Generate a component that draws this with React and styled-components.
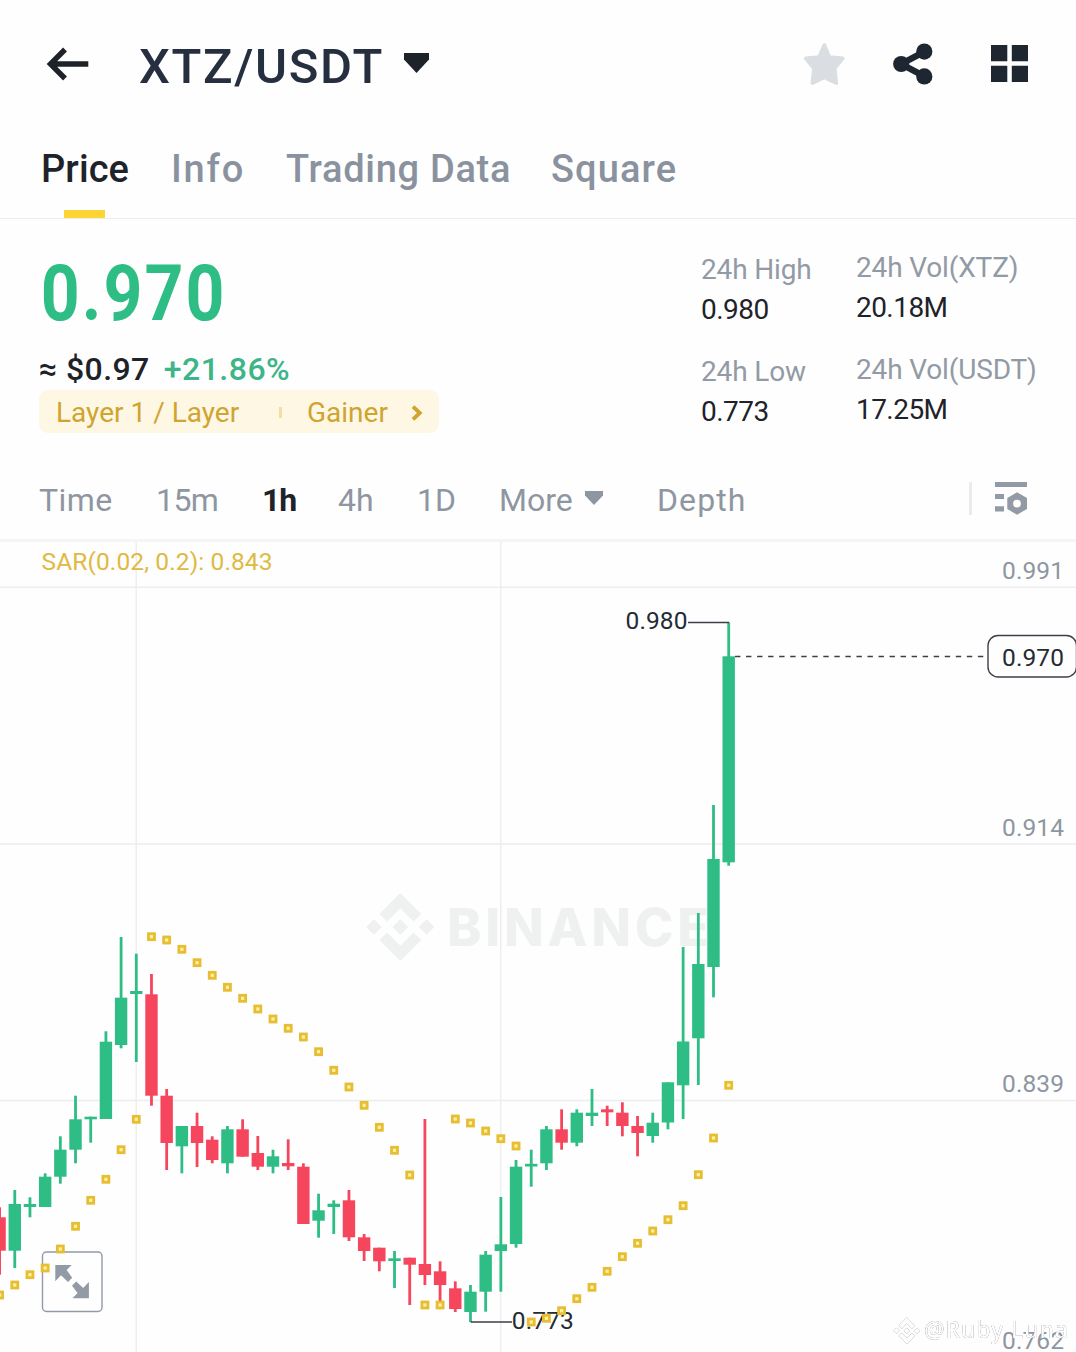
import React from "react";
import styled, { createGlobalStyle } from "styled-components";

const GlobalStyle = createGlobalStyle`
  * {
    box-sizing: border-box;
  }

  body {
    margin: 0;
    background: #fefefe;
    font-family: Roboto, "Liberation Sans", sans-serif;
    color: #1e2329;
  }
`;

// === STYLES ===
const Page = styled.div`
  width: 1076px;
  height: 1352px;
  overflow: hidden;
  display: flex;
  flex-direction: column;
  background: #fefefe;
`;

const Header = styled.header`
  height: 128px;
  padding: 0 47px 0 46px;
  display: flex;
  align-items: center;
  justify-content: space-between;

  svg {
    display: block;
  }
`;

const HeaderLeft = styled.div`
  display: flex;
  align-items: center;
  gap: 22px;
`;

const HeaderRight = styled.div`
  display: grid;
  grid-template-columns: 89px 98px 38px;
  align-items: center;
`;

const Pair = styled.h1`
  margin: 5px 0 0 28px;
  width: 243px;
  font-size: 49px;
  line-height: 58px;
  font-weight: 500;
  letter-spacing: 1.65px;
  white-space: nowrap;
  color: #262f3f;

  & + svg {
    margin-top: -2px;
  }
`;

const Tabs = styled.nav`
  height: 91px;
  padding-left: 41px;
  display: grid;
  grid-template-columns: 130px 115px 265px auto;
  border-bottom: 1px solid #ededee;
`;

const Tab = styled.div`
  display: flex;
  flex-direction: column;
  align-items: flex-start;
  justify-content: space-between;
  padding-top: 18px;
  font-size: 38px;
  line-height: 46px;
  font-weight: 500;
  letter-spacing: ${(p) => p.$spacing || 0}px;
  white-space: nowrap;
  color: ${(p) => (p.$active ? "#1e2329" : "#8a929f")};
`;

const TabMark = styled.span`
  width: 41px;
  height: 8px;
  margin-left: 23px;
  background: #fcd535;
`;

const Summary = styled.section`
  height: 241px;
  display: grid;
  grid-template-columns: 662px 155px auto;
  padding-left: 39px;
`;

const PriceBox = styled.div`
  padding-top: 30px;
`;

const LastPrice = styled.div`
  height: 90px;
  padding-left: 2px;
  font-size: 78px;
  line-height: 90px;
  font-weight: 700;
  letter-spacing: 2.4px;
  color: #2ebd85;
  transform: scaleX(0.87);
  transform-origin: 0 0;
`;

const Approx = styled.div`
  display: flex;
  gap: 14px;
  margin-top: 11px;
  height: 40px;
  font-size: 32px;
  line-height: 38px;
  font-weight: 500;
  letter-spacing: 0.4px;

  span:last-child {
    color: #3db588;
    letter-spacing: 0.5px;
  }
`;

const Tags = styled.div`
  display: grid;
  grid-template-columns: 223px 28px 104px auto;
  align-items: center;
  width: 400px;
  height: 43px;
  padding-left: 17px;
  border-radius: 9px;
  background: #fef7e4;
  color: #cfa42f;
  font-size: 28px;
  line-height: 45px;
  white-space: nowrap;
`;

const TagSplit = styled.span`
  width: 3px;
  height: 11px;
  background: #f3dda2;
`;

const StatCol = styled.div`
  padding-top: ${(p) => p.$top}px;
`;

const Stat = styled.div`
  height: 102px;
  font-size: 28px;
  line-height: 40px;
  letter-spacing: -0.55px;
  white-space: nowrap;

  span {
    display: block;
    color: #929aa5;
    letter-spacing: -0.15px;
  }
`;

const Intervals = styled.div`
  height: 82px;
  padding-left: 39px;
  display: grid;
  grid-template-columns: 117px 106px 76px 79px 82px 158px 312px 26px auto;
  align-items: center;
  border-bottom: 3px solid #f5f5f6;
  color: #8e96a2;
`;

const Interval = styled.div`
  display: flex;
  align-items: center;
  gap: 12px;
  font-size: 32px;
  line-height: 38px;
  letter-spacing: ${(p) => p.$spacing || 0}px;
  font-weight: ${(p) => (p.$active ? 700 : 400)};
  color: ${(p) => (p.$active ? "#1e2329" : "inherit")};

  svg {
    margin-top: -4px;
  }
`;

const Divider = styled.span`
  width: 3px;
  height: 33px;
  margin-top: -3px;
  background: #eaebee;
`;

const SettingsSvg = styled.svg`
  margin-top: -3px;
`;

const Chart = styled.svg`
  display: block;
  width: 1076px;
  height: 810px;
  font-family: Roboto, sans-serif;
  font-size: 24.5px;
`;

const AxisText = styled.text`
  fill: #8e96a2;
`;

const PriceText = styled.text`
  fill: #262b33;
`;

const SarText = styled.text`
  fill: #dfba42;
`;

const WatermarkText = styled.text`
  font-family: Inter, sans-serif;
  font-size: 52px;
  font-weight: 800;
  fill: #eff1f1;
`;

const UserText = styled.text`
  font-family: "Noto Sans", sans-serif;
  font-size: 23px;
  font-weight: 500;
  fill: #fefefe;
`;

const Signature = styled.g`
  filter: drop-shadow(0.9px 0.9px 0.4px rgba(60, 60, 60, 0.8));
`;

// === DATA ===
const GREEN = "#2ebd85";
const RED = "#f6465d";
const STEP = 15.19;
const LAST_X = 728.7;

// [up, high, body top, body bottom, low, sar]
const candles = [
  [0, 1207.3, 1217.3, 1250.7, 1274.7, 1295],
  [1, 1190, 1204, 1250.7, 1268, 1285],
  [1, 1197.3, 1204, 1207, 1217.3, 1274.7],
  [1, 1173.3, 1176.7, 1207, 1207, 1268],
  [1, 1136.3, 1149.7, 1176.7, 1183.7, 1249],
  [1, 1095.7, 1119.3, 1149.7, 1163.3, 1226.3],
  [1, 1116.7, 1116.7, 1119.3, 1142.7, 1200.3],
  [1, 1031.3, 1041.7, 1119, 1119, 1179.3],
  [1, 937, 997.7, 1045, 1048.3, 1149.7],
  [1, 953.7, 991, 994, 1062, 1119.3],
  [0, 974, 994.3, 1095.7, 1105.7, 936.7],
  [0, 1089, 1095.7, 1143, 1170, 940],
  [1, 1126, 1126, 1146.3, 1173.3, 949.3],
  [0, 1112.7, 1126, 1143, 1167, 962.7],
  [0, 1136.3, 1139.7, 1160, 1163.3, 975.3],
  [1, 1126, 1129.3, 1163.3, 1173.3, 987.3],
  [0, 1119.3, 1129.3, 1156.7, 1156.7, 998.3],
  [0, 1136, 1153, 1166.7, 1170, 1009],
  [1, 1149.7, 1156.3, 1166.7, 1173.3, 1019],
  [0, 1139.3, 1163, 1166.3, 1170, 1028.3],
  [0, 1163.3, 1166.7, 1224, 1224, 1037],
  [1, 1193.7, 1210.3, 1220.7, 1237.7, 1051.7],
  [1, 1200.3, 1203.7, 1207, 1234, 1070.3],
  [0, 1190, 1200.3, 1237.3, 1241, 1087],
  [0, 1234, 1237.3, 1251, 1261, 1105.3],
  [0, 1247.7, 1247.7, 1261.3, 1271.3, 1127.3],
  [1, 1251, 1258.3, 1261, 1288, 1150.3],
  [0, 1257.7, 1257.7, 1264.7, 1305, 1175],
  [0, 1119, 1264, 1275, 1285, 1305],
  [0, 1261.3, 1271.3, 1285, 1305, 1305],
  [0, 1281.3, 1288.3, 1309, 1312, 1119],
  [1, 1285, 1291.7, 1312, 1322, 1123],
  [1, 1251, 1254.7, 1291.7, 1311.7, 1131],
  [1, 1197, 1244.3, 1251, 1291.7, 1138.7],
  [1, 1160, 1166.7, 1244, 1247.7, 1146],
  [1, 1149.7, 1163.8, 1166.5, 1186.7, 1322],
  [1, 1126, 1129.3, 1163.3, 1170, 1318.3],
  [0, 1109.3, 1129.3, 1142.7, 1149.7, 1310.7],
  [1, 1109.3, 1112.7, 1142.7, 1146.3, 1298.7],
  [1, 1089, 1112.7, 1116, 1126, 1287.3],
  [0, 1105.7, 1109.3, 1112.3, 1126, 1271.3],
  [0, 1102.3, 1112.7, 1126, 1136.3, 1256.7],
  [0, 1116, 1126, 1133, 1156.3, 1243.3],
  [1, 1112.7, 1122.7, 1136, 1142.7, 1231],
  [1, 1082.3, 1082.3, 1122.5, 1129.3, 1219.7],
  [1, 947, 1041.5, 1085.3, 1119, 1205.7],
  [1, 913, 964, 1038.3, 1085, 1174.7],
  [1, 805, 859, 967, 997.3, 1138],
  [1, 622.3, 656.3, 862.3, 865.7, 1085.3],
];

const candleX = (i) => LAST_X - STEP * (candles.length - 1 - i);

const axis = [
  ["0.991", 579],
  ["0.914", 836],
  ["0.839", 1092],
  ["0.762", 1349],
];

// === ICONS ===
const BackIcon = () => (
  <svg width="43" height="34" viewBox="0 0 43 34" fill="none" stroke="#1e2329">
    <path d="M42.3 17H4.5M19 2.5 4.5 17 19 31.5" strokeWidth="5.4" />
  </svg>
);

const Caret = ({ width, height, color }) => (
  <svg width={width} height={height} viewBox="0 0 25 20" preserveAspectRatio="none">
    <path d="M0 0H25V6.5L12.5 20 0 6.5Z" fill={color} />
  </svg>
);

const StarIcon = () => (
  <svg width="42" height="42" viewBox="0 0 42 42">
    <path
      d="M20.3 2 25.5 14 38.8 15.3 30.7 25.5 32.3 40 20.3 34.3 8.3 40 9.9 25.5 1.8 15.3 15.1 14Z"
      fill="#dadde2"
      stroke="#dadde2"
      strokeWidth="3.6"
      strokeLinejoin="round"
    />
  </svg>
);

const ShareIcon = () => (
  <svg width="40" height="42" viewBox="0 0 40 42" fill="#1e2631">
    <path d="M31.5 8.7 8.2 21 31.5 33.3" fill="none" stroke="#1e2631" strokeWidth="6.4" />
    <circle cx="31.3" cy="8.6" r="8.1" />
    <circle cx="8.2" cy="21" r="8.1" />
    <circle cx="31.3" cy="33.4" r="8.1" />
  </svg>
);

const GridIcon = () => (
  <svg width="38" height="38" viewBox="0 0 38 38" fill="#1e2631">
    <path d="M0 0H16.3V16.3H0ZM20.8 0H37V16.3H20.8ZM0 20.8H16.3V37H0ZM20.8 20.8H37V37H20.8Z" />
  </svg>
);

const ChevronIcon = () => (
  <svg width="13" height="16" viewBox="0 0 13 16" fill="none" stroke="#cfa42f">
    <path d="M2 1.6 8.8 8 2 14.4" strokeWidth="3.8" />
  </svg>
);

const SettingsIcon = () => (
  <SettingsSvg width="33" height="34" viewBox="0 0 33 34" fill="#929aa5">
    <path d="M0 1H32V6H0ZM0 13H9V18H0ZM0 25.3H9V30.6H0Z" />
    <path
      fillRule="evenodd"
      d="M22 11.3 32 17V28L22 33.7 12.3 28V17ZM22 18.7A3.9 3.9 0 1 0 22 26.5 3.9 3.9 0 1 0 22 18.7Z"
    />
  </SettingsSvg>
);

const LogoPath = () => (
  <path d="M38.73 53.2l24.59-24.58 24.6 24.6 14.3-14.31L63.32 0 24.43 38.9l14.3 14.3zM0 63.31l14.3-14.31 14.31 14.31-14.31 14.3zM38.73 73.41l24.59 24.59 24.6-24.6 14.31 14.29-38.9 38.91-38.91-38.88v-.02zM98 63.31l14.3-14.31 14.31 14.3-14.31 14.32zM77.83 63.3L63.32 48.78 48.81 63.28l14.51 14.5 14.51-14.47z" />
);

// === CHART ===
const PriceChart = () => (
  <Chart viewBox="0 542 1076 810">
    <g fill="#eff1f1" transform="translate(366.3 893) scale(0.537)">
      <LogoPath />
    </g>
    <WatermarkText x="447" y="946" textLength="262">
      BINANCE
    </WatermarkText>

    {/* grid */}
    <path
      d="M136.2 542V1352M500.8 542V1352M0 587.3H1076M0 844H1076M0 1100.5H1076"
      stroke="#ededef"
      strokeWidth="1.4"
    />

    {axis.map(([label, y]) => (
      <AxisText key={label} x="1002" y={y} textLength="62">
        {label}
      </AxisText>
    ))}

    <SarText x="41.5" y="570" textLength="231">
      SAR(0.02, 0.2): 0.843
    </SarText>

    {/* full screen button */}
    <rect x="42.5" y="1252" width="59.5" height="59.5" rx="4" fill="none" stroke="#929aa5" strokeWidth="1.4" />
    <path
      d="M55.3 1265H71.7L66.6 1270.1 72.2 1277.7 68 1281.9 61 1275.3 55.3 1281.3Z M88.9 1298.2H72.5L77.6 1293.1 72 1285.7 76.2 1281.4 83.2 1288 88.9 1281.9Z"
      fill="#929aa5"
    />

    {candles.map(([up, high, top, bottom, low], i) => (
      <g key={i} fill={up ? GREEN : RED}>
        <rect x={candleX(i) - 1.4} y={high} width="2.8" height={low - high} />
        <rect x={candleX(i) - 6.2} y={top} width="12.4" height={bottom - top} />
      </g>
    ))}

    {/* high / low labels */}
    <path d="M688 622.5H729M470.6 1322H512" stroke="#3b4048" strokeWidth="1.5" />
    <PriceText x="625.5" y="629" textLength="62">
      0.980
    </PriceText>
    <PriceText x="511.8" y="1329" textLength="62">
      0.773
    </PriceText>

    {candles.map((c, i) => (
      <rect
        key={i}
        x={candleX(i) - 3}
        y={c[5] - 3}
        width="6"
        height="6"
        fill="#fff3a0"
        stroke="#e6bd33"
        strokeWidth="2.8"
      />
    ))}

    {/* last price */}
    <path d="M735 656.5H984" stroke="#3b4048" strokeWidth="1.5" strokeDasharray="5.4 5.64" />
    <rect x="988" y="635.5" width="88.5" height="41.5" rx="10" fill="#fefefe" stroke="#3b4048" strokeWidth="1.4" />
    <PriceText x="1002" y="666" textLength="62">
      0.970
    </PriceText>

    <Signature>
      <g fill="#fefefe" transform="translate(893.5 1317.5) scale(0.21)">
        <LogoPath />
      </g>
      <UserText x="924" y="1338" textLength="144">
        @Ruby Luna
      </UserText>
    </Signature>
  </Chart>
);

const App = () => {
  return (
    <>
      <GlobalStyle />
      <Page>
        <Header>
          <HeaderLeft>
            <BackIcon />
            <Pair>XTZ/USDT</Pair>
            <Caret width={25} height={20} color="#1e2329" />
          </HeaderLeft>
          <HeaderRight>
            <StarIcon />
            <ShareIcon />
            <GridIcon />
          </HeaderRight>
        </Header>

        <Tabs>
          <Tab $active $spacing={0.1}>
            Price
            <TabMark />
          </Tab>
          <Tab $spacing={1.8}>Info</Tab>
          <Tab $spacing={0.7}>Trading Data</Tab>
          <Tab $spacing={1.1}>Square</Tab>
        </Tabs>

        <Summary>
          <PriceBox>
            <LastPrice>0.970</LastPrice>
            <Approx>
              <span>≈ $0.97</span>
              <span>+21.86%</span>
            </Approx>
            <Tags>
              <span>Layer 1 / Layer</span>
              <TagSplit />
              <span>Gainer</span>
              <ChevronIcon />
            </Tags>
          </PriceBox>
          <StatCol $top={31}>
            <Stat>
              <span>24h High</span>
              0.980
            </Stat>
            <Stat>
              <span>24h Low</span>
              0.773
            </Stat>
          </StatCol>
          <StatCol $top={29}>
            <Stat>
              <span>24h Vol(XTZ)</span>
              20.18M
            </Stat>
            <Stat>
              <span>24h Vol(USDT)</span>
              17.25M
            </Stat>
          </StatCol>
        </Summary>

        <Intervals>
          <Interval $spacing={0.4}>Time</Interval>
          <Interval $spacing={-0.6}>15m</Interval>
          <Interval $active $spacing={-1}>1h</Interval>
          <Interval>4h</Interval>
          <Interval>1D</Interval>
          <Interval>
            More
            <Caret width={18} height={14} color="#8e96a2" />
          </Interval>
          <Interval $spacing={1.1}>Depth</Interval>
          <Divider />
          <SettingsIcon />
        </Intervals>

        <PriceChart />
      </Page>
    </>
  );
};

export default App;
